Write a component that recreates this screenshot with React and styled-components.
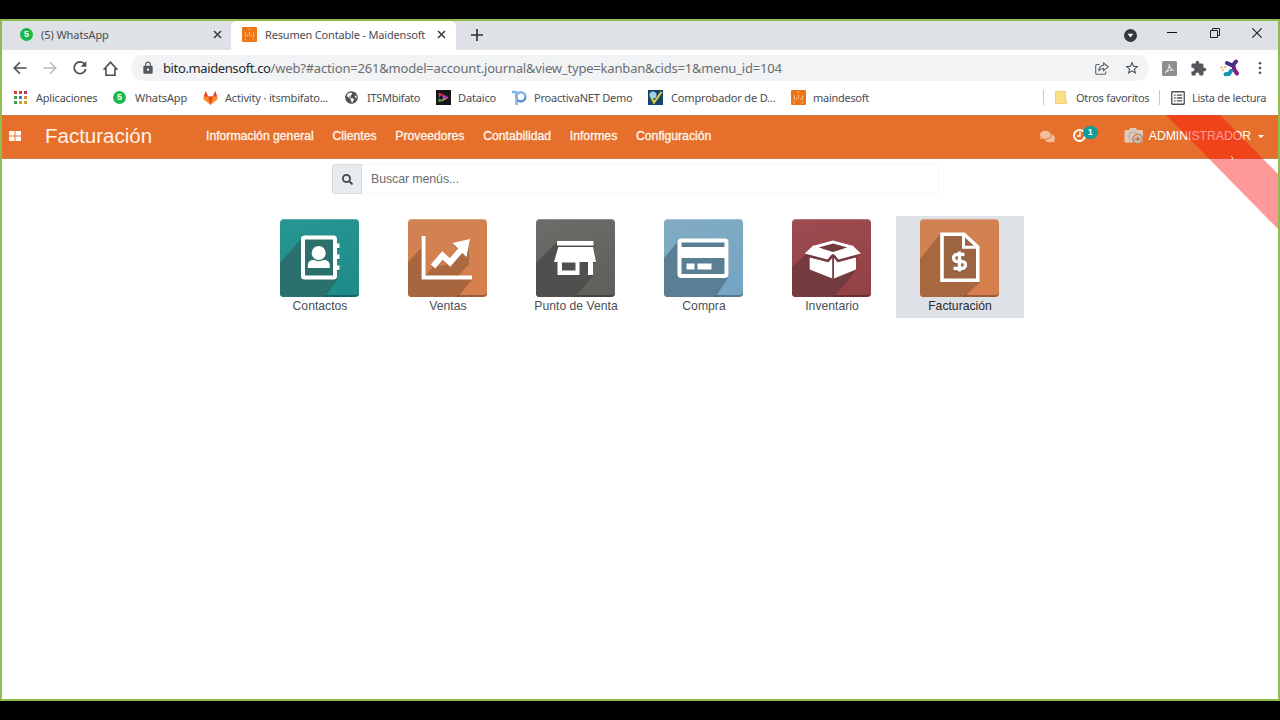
import React from 'react';
import styled, { createGlobalStyle } from 'styled-components';
import { FaComments, FaSearch, FaGlobeAmericas } from 'react-icons/fa';
import { MdExtension, MdLock, MdStarBorder } from 'react-icons/md';
import { DollarSign } from 'lucide-react';

const colors = {
    frame: '#8fbc4c',
    tabStrip: '#dee1e6',
    orange: '#e6702b',
    teal: '#0f9d9c',
    chromeText: '#4a4d51',
    chromeIcon: '#4b4f54',
}

const GlobalStyle = createGlobalStyle`
    * {
        box-sizing: border-box;
    }

    body {
        margin: 0;
        background: #000;
        font-family: "Liberation Sans", Arial, sans-serif;
    }

    svg {
        display: block;
        flex: none;
    }
`

const Screen = styled.div`
    width: 1280px;
    height: 720px;
    padding: 19px 0;
    background: #000;
    overflow: hidden;
`

const Window = styled.div`
    position: relative;
    height: 682px;
    border: 2px solid ${colors.frame};
    background: #fff;
    overflow: hidden;
`

/* browser chrome */

const TabStrip = styled.div`
    display: flex;
    height: 29px;
    background: ${colors.tabStrip};
    font-family: "Noto Sans", sans-serif;
`

const Tab = styled.div`
    display: flex;
    align-items: center;
    width: ${props => props.$active ? '225px' : '229px'};
    padding: ${props => props.$active ? '0 10px 2px 11px' : '0 9px 2px 18px'};
    background: ${props => props.$active ? '#fff' : 'transparent'};
    border-radius: 6px 6px 0 0;
    color: ${colors.chromeText};
`

const TabTitle = styled.span`
    flex: 1;
    margin-left: 8px;
    font-size: 11px;
    letter-spacing: ${props => props.$spacing || 0}px;
    white-space: nowrap;
`

const NewTab = styled.div`
    display: flex;
    align-items: center;
    padding: 0 0 1px 15px;
`

const WindowButtons = styled.div`
    display: flex;
    align-items: center;
    margin-left: auto;
`

const WindowButton = styled.div`
    display: flex;
    justify-content: center;
    width: ${props => props.$width || 43}px;
    padding-bottom: 6px;
`

const TabSearch = styled.div`
    width: 14px;
    margin-right: 12px;
`

const Toolbar = styled.div`
    display: flex;
    align-items: center;
    height: 35px;
    padding: 1px 10px 0 11px;
    color: ${colors.chromeIcon};
`

const NavButtons = styled.div`
    display: flex;
    gap: 16px;
    width: 118px;
`

const AddressBar = styled.div`
    display: flex;
    align-items: center;
    width: 1018px;
    height: 26px;
    padding: 0 9px 0 10px;
    border-radius: 13px;
    background: #f1f3f4;
`

const Url = styled.div`
    flex: 1;
    margin-left: 8px;
    font-family: "Noto Sans", sans-serif;
    font-size: 13px;
    letter-spacing: -0.185px;
    white-space: nowrap;
    color: #6b6e72;
`

const Host = styled.span`
    letter-spacing: -0.38px;
    color: #27292c;
`

const AddressActions = styled.div`
    display: flex;
    align-items: center;
    gap: 15px;
`

const Extensions = styled.div`
    display: flex;
    align-items: center;
    gap: 13px;
    margin-left: 13px;
`

const Bookmarks = styled.div`
    display: flex;
    align-items: center;
    height: 30px;
    padding: 0 0 5px 12px;
    font-family: "Noto Sans", sans-serif;
    font-size: 11px;
    color: ${colors.chromeText};
`

const Bookmark = styled.div`
    display: flex;
    align-items: center;
    flex: none;
    width: ${props => props.$width}px;
    letter-spacing: ${props => props.$spacing || 0}px;
    white-space: nowrap;
`

const BookmarkIcon = styled.div`
    display: flex;
    flex: none;
    width: ${props => props.$width || 22}px;
`

const Divider = styled.div`
    width: 1px;
    height: 15px;
    margin-right: 11px;
    background: #c4c7cb;
`

const BookmarksEnd = styled.div`
    display: flex;
    align-items: center;
    margin-left: auto;
`

const WhatsBadge = styled.div`
    width: 13px;
    height: 13px;
    border-radius: 50%;
    background: #18b848;
    color: #fff;
    font: bold 9px/13px "Liberation Sans", sans-serif;
    text-align: center;
`

/* odoo */

const Navbar = styled.div`
    display: flex;
    align-items: center;
    height: 44px;
    padding: 0 14px 2px 7px;
    border-top: 1px solid #cf7a48;
    border-bottom: 1px solid #cb7a4a;
    background: ${colors.orange};
    color: #fff;
    font-size: 12.2px;
`

const Brand = styled.div`
    width: 161px;
    margin-left: 24px;
    font-size: 20.5px;
    color: #fff3ea;
`

const Menu = styled.div`
    display: flex;
    gap: 18.8px;
    color: #fff6ee;
    -webkit-text-stroke: 0.3px #fff6ee;
`

const Systray = styled.div`
    display: flex;
    align-items: center;
    margin-left: auto;
    color: #f3bf9f;
`

const Activities = styled.div`
    position: relative;
    width: 51px;
    margin: 0 0 2px 18px;
    color: #fff;
`

const Count = styled.span`
    position: absolute;
    top: -2px;
    left: 10px;
    width: 15px;
    height: 13px;
    border-radius: 7px;
    background: ${colors.teal};
    font: bold 9px/13px "Liberation Sans", sans-serif;
    text-align: center;
`

const User = styled.div`
    display: flex;
    align-items: center;
    color: #fff;
`

const UserName = styled.span`
    margin: 0 7px 0 5px;
`

const Caret = styled.span`
    border: 3.5px solid transparent;
    border-top-color: #fff;
    border-bottom: 0;
`

const Ribbon = styled.div`
    position: absolute;
    top: 94px;
    right: 0;
    width: 112px;
    height: 114px;
    background: rgba(255, 0, 0, 0.4);
    clip-path: polygon(0 0, 54px 0, 112px 59px, 112px 114px);

    svg {
        margin: 41px 0 0 64px;
    }
`

const Search = styled.div`
    display: flex;
    width: 607px;
    height: 30px;
    margin: 5px 0 0 330px;
`

const SearchButton = styled.div`
    display: flex;
    align-items: center;
    justify-content: center;
    width: 30px;
    border: 1px solid #d6dade;
    border-radius: 3px 0 0 3px;
    background: #e9ecef;
    color: #40454a;
`

const SearchInput = styled.div`
    flex: 1;
    padding-left: 9px;
    border: 1px solid #f7f7f7;
    border-left: 0;
    font-size: 12.4px;
    line-height: 28px;
    letter-spacing: -0.1px;
    color: #6a6e73;
`

const Apps = styled.div`
    display: flex;
    margin: 22px 0 0 254px;
`

const AppCell = styled.div`
    display: flex;
    flex-direction: column;
    align-items: center;
    width: 128px;
    height: 102px;
    padding-top: 3px;
    background: ${props => props.$selected ? '#dee1e6' : 'transparent'};
    color: ${props => props.$selected ? '#26292c' : '#4c5054'};
    font-size: 12.2px;
    line-height: 19px;
`

const Tile = styled.div`
    width: 79px;
    height: 78px;
    margin-right: 1px;
    border-radius: 4px;
    background: linear-gradient(160deg, ${props => props.$from}, ${props => props.$to});
    box-shadow: inset 0 1px 0 rgba(255, 255, 255, 0.25), inset 0 -2px 0 rgba(0, 0, 0, 0.28);
    overflow: hidden;

    svg {
        filter: drop-shadow(0 1px 0 rgba(0, 0, 0, 0.25));
    }
`

function CloseIcon({ size = 9, width = 1.6, color = '#3c4043' }) {
    return (
        <svg width={size} height={size} viewBox="0 0 9 9" stroke={color} strokeWidth={width}>
            <path d="M1 1l7 7M8 1l-7 7" />
        </svg>
    )
}

function MaidenIcon() {
    return (
        <svg width="15" height="15" viewBox="0 0 15 15">
            <rect width="15" height="15" rx="1" fill="#ee7414" />
            <path d="M6.3 2.2h2.4M7.5 5v3M3.5 5.5v5M11.5 5.5v5M5.7 8v2M9.3 8v2M2.5 12.8h2M10.5 12.8h2" stroke="#ffd0a0" strokeWidth="1.1" strokeDasharray="1.4 .7" />
        </svg>
    )
}

function AppsIcon() {
    const dots = ['#d2413a', '#d2413a', '#b03a6e', '#3a9b54', '#3b78c9', '#d58c2a', '#3a9b54', '#d0a02c', '#d0a02c'];
    return (
        <svg width="13" height="13" viewBox="0 0 13 13">
            {dots.map((fill, i) => (
                <rect key={i} x={(i % 3) * 5} y={Math.floor(i / 3) * 5} width="3" height="3" fill={fill} />
            ))}
        </svg>
    )
}

function GitlabIcon() {
    return (
        <svg width="15" height="14" viewBox="0 0 15 14">
            <path d="M2.8 0L.2 8l7.3 6 7.3-6-2.6-8-2.2 5.4H5z" fill="#fc8a26" />
            <path d="M2.8 0L.9 5.4H5zM12.2 0l1.9 5.4H10zM5 5.4h5L7.5 13.8z" fill="#e0432a" />
        </svg>
    )
}

function DataicoIcon() {
    return (
        <svg width="15" height="15" viewBox="0 0 15 15">
            <rect width="15" height="15" fill="#17141c" />
            <path d="M2.500 2.500l3.500 2.500-3 2.500z" fill="#e2412f" />
            <path d="M3.500 2.500l9.500 4.800-5.500-.8z" fill="#d2267c" />
            <path d="M6 5.500l7 2-6 2z" fill="#9a49c8" />
            <path d="M2.500 12.500V8.500l3.500 1z" fill="#35b25c" />
            <path d="M3.500 12.500l9-4.500-5.500 1z" fill="#e0b43c" />
        </svg>
    )
}

function ProactivaIcon() {
    return (
        <svg width="15" height="15" viewBox="0 0 15 15" fill="none" stroke="#83b3e4" strokeWidth="2.6">
            <path d="M0 2h5M4.5 2v13" />
            <circle cx="8.8" cy="6.8" r="4.6" />
            <path d="M5.5 10a4.6 4.6 0 0 0 7.9-3" stroke="#4e87cf" strokeWidth="1.4" />
        </svg>
    )
}

function CheckerIcon() {
    return (
        <svg width="15" height="15" viewBox="0 0 15 15">
            <rect width="15" height="15" fill="#17446b" />
            <circle cx="5" cy="5" r="3.5" fill="#9fd0e6" />
            <path d="M3.500 8l2.500 4.500 7.500-10.500" fill="none" stroke="#e3cf3d" strokeWidth="2.1" />
        </svg>
    )
}

function FolderIcon() {
    return (
        <svg width="12" height="13" viewBox="0 0 12 13">
            <path d="M.5.5h10v8l1 1v3H.5z" fill="#fbe08a" stroke="#ecc968" strokeWidth=".8" />
        </svg>
    )
}

function ListIcon() {
    return (
        <svg width="14" height="14" viewBox="0 0 13 13" fill="none" stroke="#4b4f54" strokeWidth="1.2">
            <rect x=".7" y=".7" width="11.6" height="11.6" rx=".6" />
            <path d="M2.7 3.8h1.5M5.4 3.8h5M2.7 6.5h1.5M5.4 6.5h5M2.7 9.2h1.5M5.4 9.2h5" />
        </svg>
    )
}

function CameraIcon() {
    return (
        <svg width="20" height="18" viewBox="0 0 20 18">
            <path d="M2 3h3l1-2h6l1 2h4.500q1.500 0 1.500 1.500V14q0 1.500-1.500 1.500H2Q.5 15.500.5 14V4.500Q.5 3 2 3z" fill="#dccabf" />
            <circle cx="9" cy="9" r="4" fill="none" stroke="#c9a792" strokeWidth="1.2" />
            <circle cx="13.700" cy="12" r="4.800" fill="#d6bfb1" stroke="#c0794f" strokeWidth="1.2" />
            <path d="M13.700 9.400v5.200M11.100 12h5.200" stroke="#bd744a" strokeWidth="1.3" />
        </svg>
    )
}

const bookmarks = [
    { label: 'Aplicaciones', icon: <AppsIcon />, width: 99, spacing: -0.22 },
    { label: 'WhatsApp', icon: <WhatsBadge>5</WhatsBadge>, width: 90, spacing: -0.1 },
    { label: 'Activity · itsmbifato...', icon: <GitlabIcon />, width: 142, spacing: -0.17 },
    { label: 'ITSMbifato', icon: <FaGlobeAmericas size={13} color="#505357" />, width: 91, spacing: -0.3 },
    { label: 'Dataico', icon: <DataicoIcon />, width: 76, spacing: -0.15 },
    { label: 'ProactivaNET Demo', icon: <ProactivaIcon />, width: 136, spacing: -0.22 },
    { label: 'Comprobador de D...', icon: <CheckerIcon />, width: 143, iconWidth: 23, spacing: -0.17 },
    { label: 'maindesoft', icon: <MaidenIcon />, width: 90, spacing: -0.28 },
]

function BrowserChrome() {
    return (
        <>
            <TabStrip>
                <Tab>
                    <WhatsBadge>5</WhatsBadge>
                    <TabTitle $spacing={-0.08}>(5) WhatsApp</TabTitle>
                    <CloseIcon />
                </Tab>
                <Tab $active>
                    <MaidenIcon />
                    <TabTitle $spacing={-0.18}>Resumen Contable - Maidensoft</TabTitle>
                    <CloseIcon />
                </Tab>
                <NewTab>
                    <svg width="12" height="12" viewBox="0 0 11 11" stroke="#2f3235" strokeWidth="1.5">
                        <path d="M5.5 0v11M0 5.5h11" />
                    </svg>
                </NewTab>
                <WindowButtons>
                    <TabSearch>
                        <svg width="13" height="13" viewBox="0 0 13 13">
                            <circle cx="6.5" cy="6.5" r="6.5" fill="#35393d" />
                            <path d="M3.7 4.8h5.6L6.5 8.5z" fill="#fff" />
                        </svg>
                    </TabSearch>
                    <WindowButton>
                        <svg width="10" height="10" viewBox="0 0 10 10" stroke="#111" strokeWidth="1">
                            <path d="M0 4.5h10" />
                        </svg>
                    </WindowButton>
                    <WindowButton>
                        <svg width="10" height="10" viewBox="0 0 10 10" stroke="#222" fill="none">
                            <path d="M.5 2.5h7v7h-7zM2.5 2.5v-2h7v7h-2" />
                        </svg>
                    </WindowButton>
                    <WindowButton $width={42}>
                        <CloseIcon size={12} width={0.9} color="#222" />
                    </WindowButton>
                </WindowButtons>
            </TabStrip>
            <Toolbar>
                <NavButtons>
                    <svg width="14" height="14" viewBox="0 0 14 14" fill="none" stroke="#4b4f54" strokeWidth="1.6">
                        <path d="M13.5 7H1.3M7 1.2L1.2 7 7 12.8" />
                    </svg>
                    <svg width="14" height="14" viewBox="0 0 14 14" fill="none" stroke="#b9bbbe" strokeWidth="1.5">
                        <path d="M.5 7h12.2M7 1.2L12.8 7 7 12.8" />
                    </svg>
                    <svg width="14" height="14" viewBox="0 0 14 14" fill="none" stroke="#4b4f54" strokeWidth="1.7">
                        <path d="M11.7 3.3A5.8 5.8 0 1 0 12.7 8" />
                        <path d="M13.4 0v5.8H7.6z" fill="#4b4f54" stroke="none" />
                    </svg>
                    <svg width="15" height="15" viewBox="0 0 15 15" fill="none" stroke="#4b4f54" strokeWidth="1.6">
                        <path d="M3 14.200V8H1.300L7.500 1.300 13.700 8H12v6.200z" />
                    </svg>
                </NavButtons>
                <AddressBar>
                    <MdLock size={14} color="#54575b" />
                    <Url><Host>bito.maidensoft.co</Host>/web?#action=261&amp;model=account.journal&amp;view_type=kanban&amp;cids=1&amp;menu_id=104</Url>
                    <AddressActions>
                        <svg width="14" height="13" viewBox="0 0 14 13" fill="none" stroke="#5c6064" strokeWidth="1.1">
                            <path d="M4.500 2.500H2q-1.300 0-1.300 1.300V11q0 1.300 1.300 1.300h7.500q1.300 0 1.300-1.300V9.500" />
                            <path d="M8.600 1l4.600 3.800-4.600 3.800V6.500C6.400 6.500 4.700 7.200 3.700 9 4 6 5.600 3.400 8.600 3.200z" />
                        </svg>
                        <MdStarBorder size={16} />
                    </AddressActions>
                </AddressBar>
                <Extensions>
                    <svg width="15" height="15" viewBox="0 0 15 15">
                        <rect width="15" height="15" rx="1.5" fill="#8c8e90" />
                        <path d="M3 11.5c2-1 4.500-4.500 4.200-8.300.3 3 2.300 5.500 4.800 6-3-.6-6 .4-9 2.300z" fill="none" stroke="#e4e4e4" strokeWidth="1.1" />
                    </svg>
                    <MdExtension size={17} color="#54575b" />
                    <svg width="20" height="18" viewBox="0 0 20 18" fill="none" strokeLinecap="round" strokeWidth="4">
                        <path d="M13.500 7l.7 3.500 2.800 4" stroke="#851a82" />
                        <path d="M7 4l5.500 2.500L16 2.500" stroke="#4d2b8c" />
                        <path d="M5.500 15.200l3.500-.4 2-3" stroke="#1992b5" />
                        <path d="M1 8.500h1.500M4.500 8h1.500M2.500 11h1" stroke="#f0a763" strokeWidth="1.3" />
                    </svg>
                    <svg width="14" height="14" viewBox="0 0 14 14" fill="#4b4f54">
                        <circle cx="7" cy="2.200" r="1.300" />
                        <circle cx="7" cy="7" r="1.300" />
                        <circle cx="7" cy="11.800" r="1.300" />
                    </svg>
                </Extensions>
            </Toolbar>
            <Bookmarks>
                {bookmarks.map(b => (
                    <Bookmark key={b.label} $width={b.width} $spacing={b.spacing}>
                        <BookmarkIcon $width={b.iconWidth}>{b.icon}</BookmarkIcon>
                        {b.label}
                    </Bookmark>
                ))}
                <BookmarksEnd>
                    <Divider />
                    <Bookmark $width={104} $spacing={-0.25}>
                        <BookmarkIcon $width={21}><FolderIcon /></BookmarkIcon>
                        Otros favoritos
                    </Bookmark>
                    <Divider />
                    <Bookmark $width={107} $spacing={-0.25}>
                        <BookmarkIcon $width={21}><ListIcon /></BookmarkIcon>
                        Lista de lectura
                    </Bookmark>
                </BookmarksEnd>
            </Bookmarks>
        </>
    )
}

function ContactsDrawing() {
    return (
        <svg width="79" height="79" viewBox="0 0 79 79">
            <path d="M21 20L0 44v35h43l14-19V18z" fill="#2c706e" />
            <rect x="23" y="18.5" width="32" height="40" rx="1.5" fill="none" stroke="#fff" strokeWidth="4" />
            <path d="M56 24.500h3.500v4.500H56zM56 35.500h3.500V40H56zM56 46.500h3.500V51H56z" fill="#fff" />
            <circle cx="38.700" cy="34" r="7" fill="#fff" />
            <path d="M27.800 49v-3c0-3 2.500-5 6-5 3 1.500 7 1.500 10 0 3.500 0 6 2 6 5v3z" fill="#fff" />
        </svg>
    )
}

function SalesDrawing() {
    return (
        <svg width="79" height="79" viewBox="0 0 79 79">
            <path d="M14 28L0 43v36h48l15-18H14z" fill="#a8663f" />
            <path d="M25 48L17 57v1h31l13-14V24L47 38 38 46z" fill="#ab693f" />
            <path d="M15.600 17v41.500H64" fill="none" stroke="#fff" strokeWidth="4" />
            <path d="M25 47.500L34.500 36.500 42 43.500 55 28.500" fill="none" stroke="#fff" strokeWidth="6" />
            <path d="M44.500 24L62 20l-3.500 18z" fill="#fff" />
        </svg>
    )
}

function ShopDrawing() {
    return (
        <svg width="79" height="79" viewBox="0 0 79 79">
            <path d="M21 23L0 44v35h37l20-23V24z" fill="#4f504e" />
            <path d="M21 22h36.500v4.500H21zM22.300 28H57l3 15H18z" fill="#fff" />
            <path d="M21.500 43h22v13h-22zM26 43.500v8h13.500v-8z" fill="#fff" fillRule="evenodd" />
            <path d="M52 43h5v13h-5z" fill="#fff" />
        </svg>
    )
}

function PurchaseDrawing() {
    return (
        <svg width="79" height="79" viewBox="0 0 79 79">
            <path d="M15 21L0 39v40h50l14-21z" fill="#5a7e93" />
            <rect x="15.500" y="21.500" width="47" height="35.500" rx="2" fill="#5a7e93" stroke="#fff" strokeWidth="4" />
            <path d="M17 28h45v11H17zM22.500 44.500h8v6h-8zM33.500 44.500h14v6h-14z" fill="#fff" />
        </svg>
    )
}

function InventoryDrawing() {
    return (
        <svg width="79" height="79" viewBox="0 0 79 79">
            <path d="M14 35L0 48v31h40l22-26V38z" fill="#733b3e" />
            <path d="M20.500 27L41 21.500l20.500 5.500L41 36z" fill="#fff" />
            <path d="M26.500 28.500L41 24.500l14.500 4L41 33z" fill="#733b3e" />
            <path d="M12.700 34.500l8.500-8L41 34l-5.500 6.500zM69 34.500l-8.500-8L41 34l5.500 6.500z" fill="#fff" />
            <path d="M17.700 38.200l18.800 5 4-4.700V59.500l-22.800-9zM64 38.200l-18.500 5-3.600-4.700V59.500l22.100-9z" fill="#fff" />
            <path d="M16 37.200l20 4.800 5-6 5 6 19-4.800M41.200 37v22.500" fill="none" stroke="#733b3e" strokeWidth="1.6" />
        </svg>
    )
}

function InvoiceDrawing() {
    return (
        <svg width="79" height="79" viewBox="0 0 79 79">
            <path d="M20 15L0 40v39h42l18-17V28z" fill="#a8683f" />
            <path d="M22 15.300h22L57.800 28v33.300H22z" fill="#9c6440" stroke="#fff" strokeWidth="3.6" />
            <path d="M43.500 15v13.200H58" fill="none" stroke="#fff" strokeWidth="3" />
            <DollarSign x="27.500" y="30.500" size={24} color="#fff" strokeWidth={3.4} strokeLinecap="butt" />
        </svg>
    )
}

const apps = [
    { name: 'Contactos', from: '#279794', to: '#1e8a87', drawing: <ContactsDrawing /> },
    { name: 'Ventas', from: '#d08253', to: '#d77f4c', drawing: <SalesDrawing /> },
    { name: 'Punto de Venta', from: '#6b6d69', to: '#5d5f5b', drawing: <ShopDrawing /> },
    { name: 'Compra', from: '#82abc2', to: '#73a5c4', drawing: <PurchaseDrawing /> },
    { name: 'Inventario', from: '#9c4c50', to: '#924145', drawing: <InventoryDrawing /> },
    { name: 'Facturación', from: '#d08253', to: '#d77f4c', drawing: <InvoiceDrawing />, selected: true },
]

const menuItems = ['Información general', 'Clientes', 'Proveedores', 'Contabilidad', 'Informes', 'Configuración'];

function OdooNavbar() {
    return (
        <Navbar>
            <svg width="12" height="10" viewBox="0 0 12 10" fill="#fff">
                <path d="M0 0h5.500v4.500H0zM6.500 0H12v4.500H6.500zM0 5.500h5.500V10H0zM6.500 5.500H12V10H6.500z" />
            </svg>
            <Brand>Facturación</Brand>
            <Menu>
                {menuItems.map(item => <span key={item}>{item}</span>)}
            </Menu>
            <Systray>
                <FaComments size={15} />
                <Activities>
                    <svg width="14" height="14" viewBox="0 0 14 14" fill="none" stroke="#fff" strokeWidth="2">
                        <circle cx="6.500" cy="7.500" r="5.500" />
                        <path d="M7 4v4H4" strokeWidth="1.3" />
                    </svg>
                    <Count>1</Count>
                </Activities>
                <User>
                    <CameraIcon />
                    <UserName>ADMINISTRADOR</UserName>
                    <Caret />
                </User>
            </Systray>
        </Navbar>
    )
}

export default function App() {
    return (
        <Screen>
            <GlobalStyle />
            <Window>
                <BrowserChrome />
                <OdooNavbar />
                <Search>
                    <SearchButton><FaSearch size={11} /></SearchButton>
                    <SearchInput>Buscar menús...</SearchInput>
                </Search>
                <Apps>
                    {apps.map(app => (
                        <AppCell key={app.name} $selected={app.selected}>
                            <Tile $from={app.from} $to={app.to}>{app.drawing}</Tile>
                            {app.name}
                        </AppCell>
                    ))}
                </Apps>
                <Ribbon>
                    <svg width="4" height="4" viewBox="0 0 4 4" stroke="#fde3d6" fill="none">
                        <path d="M1 0l1.500 1.500L2 4" />
                    </svg>
                </Ribbon>
            </Window>
        </Screen>
    )
}
